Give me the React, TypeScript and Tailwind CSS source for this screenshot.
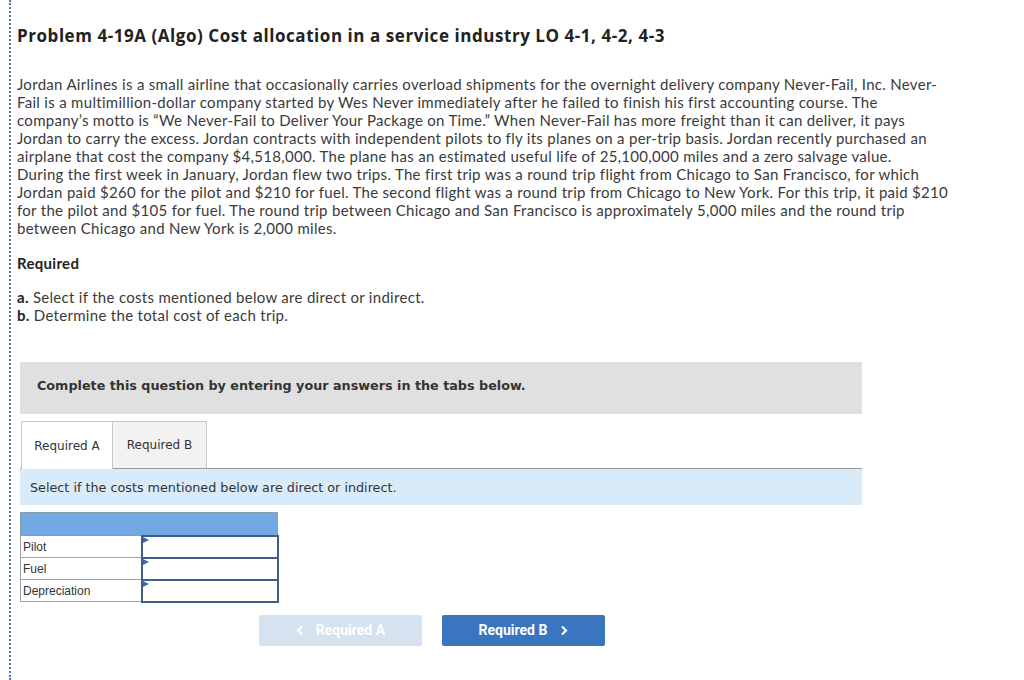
import React from "react";

const para = [
  "Jordan Airlines is a small airline that occasionally carries overload shipments for the overnight delivery company Never-Fail, Inc. Never-",
  "Fail is a multimillion-dollar company started by Wes Never immediately after he failed to finish his first accounting course. The",
  "company\u2019s motto is \u201cWe Never-Fail to Deliver Your Package on Time.\u201d When Never-Fail has more freight than it can deliver, it pays",
  "Jordan to carry the excess. Jordan contracts with independent pilots to fly its planes on a per-trip basis. Jordan recently purchased an",
  "airplane that cost the company $4,518,000. The plane has an estimated useful life of 25,100,000 miles and a zero salvage value.",
  "During the first week in January, Jordan flew two trips. The first trip was a round trip flight from Chicago to San Francisco, for which",
  "Jordan paid $260 for the pilot and $210 for fuel. The second flight was a round trip from Chicago to New York. For this trip, it paid $210",
  "for the pilot and $105 for fuel. The round trip between Chicago and San Francisco is approximately 5,000 miles and the round trip",
  "between Chicago and New York is 2,000 miles.",
];

const rows = ["Pilot", "Fuel", "Depreciation"];

export default function App() {
  return (
    <div className="w-[1024px] h-[680px] bg-white overflow-hidden">
      <div className="ml-[9px] h-[680px] border-l-2 border-dotted border-[#4f73a3] pl-[6px] font-['Lato',sans-serif] text-[#333]">
        <h1 className="pt-[26px] text-[17px] leading-[20px] font-bold text-[#222] whitespace-nowrap tracking-[0.55px] font-['Open_Sans',sans-serif]">
          Problem 4-19A (Algo) Cost allocation in a service industry LO 4-1, 4-2, 4-3
        </h1>
        <div className="mt-[29px] text-[15px] leading-[18px] tracking-[0.3px] text-[#3a3a3a]">
          {para.map((l, i) => (
            <div key={i} className="whitespace-nowrap">{l}</div>
          ))}
        </div>
        <div className="mt-[17px] text-[15px] leading-[18px] tracking-[0.3px] font-bold text-[#222]">Required</div>
        <div className="mt-[16px] text-[15px] leading-[18px] tracking-[0.3px] text-[#3a3a3a]">
          <div><span className="font-bold text-[#222]">a.</span> Select if the costs mentioned below are direct or indirect.</div>
          <div><span className="font-bold text-[#222]">b.</span> Determine the total cost of each trip.</div>
        </div>

        <div className="ml-[3px] w-[842px] mt-[38px] font-['DejaVu_Sans',sans-serif]">
          <div className="h-[52px] bg-[#e0e0e0] flex items-center pl-[17px] pb-[5px] text-[12.75px] font-bold text-[#333]">
            Complete this question by entering your answers in the tabs below.
          </div>
          <div className="mt-[8px] flex items-end h-[47px] border-b border-[#999]">
            <div className="ml-[1px] h-[48px] -mb-px w-[92px] bg-white border border-b-0 border-[#c8c8c8] flex items-center justify-center text-[12px] text-[#333]">
              Required A
            </div>
            <div className="h-[47px] w-[94px] bg-[#f2f2f2] border border-b-0 border-l-0 border-[#c8c8c8] flex items-center justify-center text-[12px] text-[#333]">
              Required B
            </div>
          </div>
          <div className="h-[36px] bg-[#d9ebf8] flex items-center pl-[10px] pt-[2px] text-[12.75px] text-[#333]">
            Select if the costs mentioned below are direct or indirect.
          </div>
          <table className="mt-[7px] border-collapse font-['Liberation_Sans',sans-serif] text-[12px] text-[#333]">
            <tbody>
              <tr>
                <td colSpan={2} className="h-[23px] w-[257px] bg-[#73a9e3] border border-[#8a9bb0]"></td>
              </tr>
              {rows.map((r) => (
                <tr key={r}>
                  <td className="h-[22px] w-[121px] border border-[#9aa4ae] px-[2px] align-middle">{r}</td>
                  <td className="h-[22px] w-[136px] border-2 border-[#3f5f86] relative p-0">
                    <svg className="absolute left-0 top-0" width="7" height="7" viewBox="0 0 7 7">
                      <polygon points="0,0 6,3 0,6" fill="#3f6aa8" />
                    </svg>
                  </td>
                </tr>
              ))}
            </tbody>
          </table>
          <div className="mt-[12px] flex gap-[20px] pl-[239px] font-['Roboto',sans-serif]">
            <div className="w-[163px] h-[31px] rounded-[2px] bg-[#d5e2f0] text-white font-bold text-[14px] flex items-center justify-center gap-[12px]">
              <svg width="8" height="11" viewBox="0 0 8 11">
                <polyline points="6,1.5 2,5.5 6,9.5" fill="none" stroke="white" strokeWidth="2.2" />
              </svg>
              <span>Required A</span>
            </div>
            <div className="w-[163px] h-[31px] rounded-[2px] bg-[#3a76bf] text-white font-bold text-[14px] flex items-center justify-center gap-[13px]">
              <span>Required B</span>
              <svg width="8" height="11" viewBox="0 0 8 11">
                <polyline points="2,1.5 6,5.5 2,9.5" fill="none" stroke="white" strokeWidth="2.2" />
              </svg>
            </div>
          </div>
        </div>
      </div>
    </div>
  );
}
